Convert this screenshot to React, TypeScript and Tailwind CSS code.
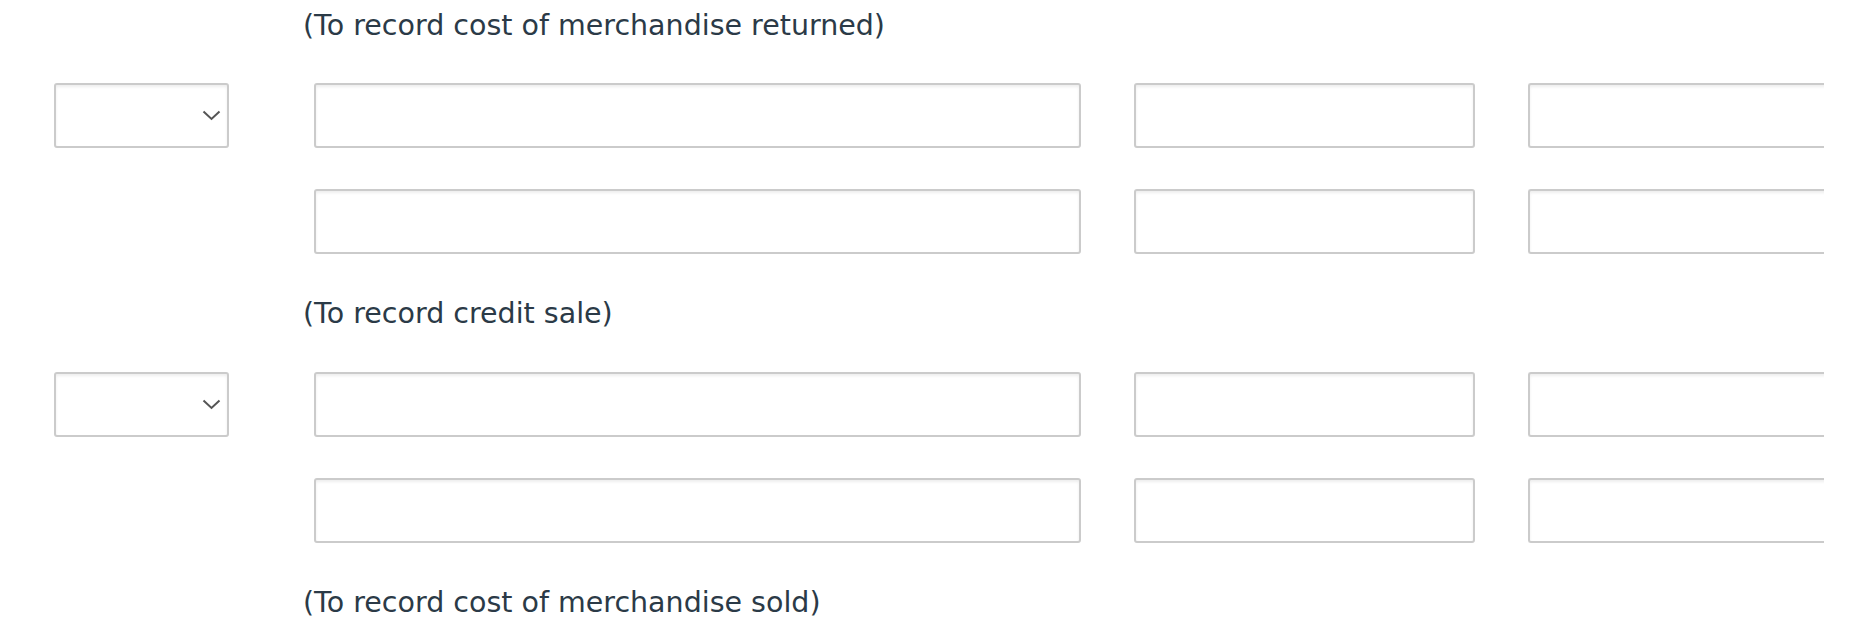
import React from "react";

const box =
  "h-[65px] shrink-0 border-2 border-[#cbcbcb] rounded-[3px] bg-white shadow-[inset_0_2px_3px_rgba(0,0,0,0.07)]";

function Row({ withSelect }: { withSelect: boolean }) {
  return (
    <div className="flex items-start h-[65px]">
      <div className="w-[54px] shrink-0" />
      {withSelect ? (
        <div className={`${box} w-[175px] relative flex items-center justify-end pr-[6px]`}>
          <svg width="19" height="11" viewBox="0 0 19 11" fill="none">
            <path d="M1.5 1.5 L9.5 9 L17.5 1.5" stroke="#555555" strokeWidth="2" />
          </svg>
        </div>
      ) : (
        <div className="w-[175px] shrink-0" />
      )}
      <div className="w-[85px] shrink-0" />
      <div className={`${box} w-[767px]`} />
      <div className="w-[53px] shrink-0" />
      <div className={`${box} w-[341px]`} />
      <div className="w-[53px] shrink-0" />
      <div className={`${box} w-[400px] border-r-0 rounded-r-none`} />
    </div>
  );
}

function Label({ text }: { text: string }) {
  return (
    <div className="pl-[303px] h-[42px] leading-[42px] text-[28.5px] text-[#2b3a47] whitespace-nowrap">
      {text}
    </div>
  );
}

export default function App() {
  return (
    <div
      className="w-[1852px] h-[644px] bg-white overflow-hidden"
      style={{ fontFamily: '"DejaVu Sans", Verdana, sans-serif' }}
    >
      <div className="w-[1824px] overflow-hidden pt-[5px]">
        <Label text="(To record cost of merchandise returned)" />
        <div className="h-[36px]" />
        <Row withSelect />
        <div className="h-[41px]" />
        <Row withSelect={false} />
        <div className="h-[39px]" />
        <Label text="(To record credit sale)" />
        <div className="h-[37px]" />
        <Row withSelect />
        <div className="h-[41px]" />
        <Row withSelect={false} />
        <div className="h-[39px]" />
        <Label text="(To record cost of merchandise sold)" />
      </div>
    </div>
  );
}
